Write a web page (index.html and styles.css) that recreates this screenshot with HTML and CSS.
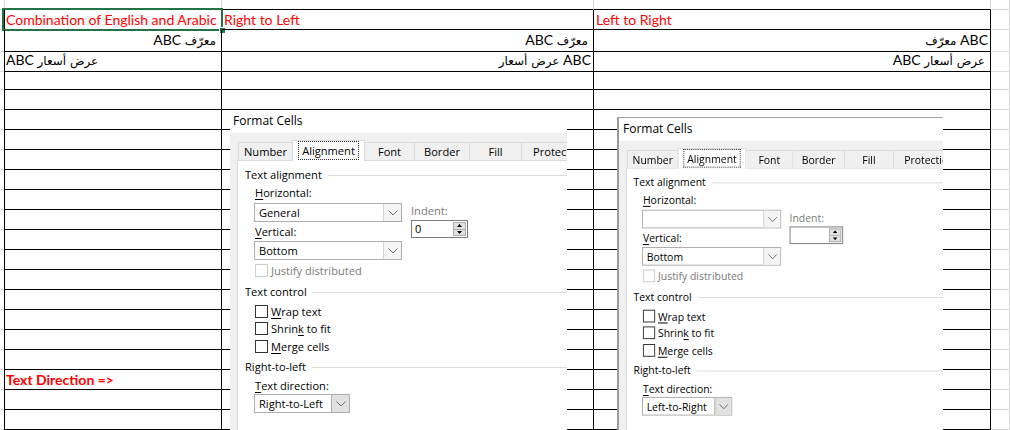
FILE: index.html
```html
<!DOCTYPE html>
<html lang="en">
<head>
<meta charset="utf-8">
<title>Text direction</title>
<link rel="stylesheet" href="styles.css">
</head>
<body>
<div class="sheet">
  <div class="row row-top"><div class="cell a"></div><div class="cell"></div><div class="cell"></div><div class="cell"></div><div class="cell e"></div></div>
  <div class="row"><div class="cell a"></div><div class="cell red active">Combination of English and Arabic<span class="selbox"><span class="handle"></span></span></div><div class="cell red">Right to Left</div><div class="cell red">Left to Right</div><div class="cell e"></div></div>
  <div class="row"><div class="cell a"></div><div class="cell r pa">ABC <span class="ar">معرّف</span></div><div class="cell r pa">ABC <span class="ar">معرّف</span></div><div class="cell r"><span class="ar">معرّف</span> ABC</div><div class="cell e"></div></div>
  <div class="row"><div class="cell a"></div><div class="cell">ABC <span class="ar">عرض أسعار</span></div><div class="cell r"><span class="ar">عرض أسعار</span> ABC</div><div class="cell r pa">ABC <span class="ar">عرض أسعار</span></div><div class="cell e"></div></div>
  <div class="row"><div class="cell a"></div><div class="cell"></div><div class="cell"></div><div class="cell"></div><div class="cell e"></div></div>
  <div class="row"><div class="cell a"></div><div class="cell"></div><div class="cell"></div><div class="cell"></div><div class="cell e"></div></div>
  <div class="row"><div class="cell a"></div><div class="cell"></div><div class="cell"></div><div class="cell"></div><div class="cell e"></div></div>
  <div class="row"><div class="cell a"></div><div class="cell"></div><div class="cell"></div><div class="cell"></div><div class="cell e"></div></div>
  <div class="row"><div class="cell a"></div><div class="cell"></div><div class="cell"></div><div class="cell"></div><div class="cell e"></div></div>
  <div class="row"><div class="cell a"></div><div class="cell"></div><div class="cell"></div><div class="cell"></div><div class="cell e"></div></div>
  <div class="row"><div class="cell a"></div><div class="cell"></div><div class="cell"></div><div class="cell"></div><div class="cell e"></div></div>
  <div class="row"><div class="cell a"></div><div class="cell"></div><div class="cell"></div><div class="cell"></div><div class="cell e"></div></div>
  <div class="row"><div class="cell a"></div><div class="cell"></div><div class="cell"></div><div class="cell"></div><div class="cell e"></div></div>
  <div class="row"><div class="cell a"></div><div class="cell"></div><div class="cell"></div><div class="cell"></div><div class="cell e"></div></div>
  <div class="row"><div class="cell a"></div><div class="cell"></div><div class="cell"></div><div class="cell"></div><div class="cell e"></div></div>
  <div class="row"><div class="cell a"></div><div class="cell"></div><div class="cell"></div><div class="cell"></div><div class="cell e"></div></div>
  <div class="row"><div class="cell a"></div><div class="cell"></div><div class="cell"></div><div class="cell"></div><div class="cell e"></div></div>
  <div class="row"><div class="cell a"></div><div class="cell"></div><div class="cell"></div><div class="cell"></div><div class="cell e"></div></div>
  <div class="row"><div class="cell a"></div><div class="cell"></div><div class="cell"></div><div class="cell"></div><div class="cell e"></div></div>
  <div class="row"><div class="cell a"></div><div class="cell red bold">Text Direction =&gt;</div><div class="cell"></div><div class="cell"></div><div class="cell e"></div></div>
  <div class="row"><div class="cell a"></div><div class="cell"></div><div class="cell"></div><div class="cell"></div><div class="cell e"></div></div>
  <div class="row"><div class="cell a"></div><div class="cell"></div><div class="cell"></div><div class="cell"></div><div class="cell e"></div></div>
</div>

<div class="dlg dlg-a">
  <div class="dlg-title">Format Cells</div>
  <div class="dlg-body">
    <div class="dlg-inner">
      <div class="tabs">
        <div class="tab t-num">Number</div>
        <div class="tab tab-on t-ali"><span class="focus">Alignment</span></div>
        <div class="tab t-font">Font</div>
        <div class="tab t-bor">Border</div>
        <div class="tab t-fill">Fill</div>
        <div class="tab t-pro">Protection</div>
      </div>
      <div class="panel">
        <div class="legend legend-first"><span>Text alignment</span></div>
        <div class="group align-row">
          <div class="col">
            <div class="lbl lbl-h"><u>H</u>orizontal:</div>
            <div class="combo combo-wide"><span class="combo-val">General</span><span class="dd"><svg width="10" height="6" viewBox="0 0 10 6"><path d="M0.5 0.5 L5 5 L9.5 0.5" fill="none" stroke="#6e6e6e" stroke-width="1"/></svg></span></div>
            <div class="lbl lbl-v"><u>V</u>ertical:</div>
            <div class="combo combo-wide combo-v"><span class="combo-val">Bottom</span><span class="dd"><svg width="10" height="6" viewBox="0 0 10 6"><path d="M0.5 0.5 L5 5 L9.5 0.5" fill="none" stroke="#6e6e6e" stroke-width="1"/></svg></span></div>
          </div>
          <div class="indent">
            <div class="lbl dis">Indent:</div>
            <div class="spin"><span class="spin-val">0</span><span class="spin-btns"><span class="sb"><svg width="5" height="3" viewBox="0 0 5 3"><path d="M0 3 L2.5 0 L5 3Z" fill="#000"/></svg></span><span class="sb"><svg width="5" height="3" viewBox="0 0 5 3"><path d="M0 0 L2.5 3 L5 0Z" fill="#000"/></svg></span></span></div>
          </div>
        </div>
        <div class="group chk chk-just dis"><span class="box"></span>Justify distributed</div>
        <div class="legend legend-tc"><span>Text control</span></div>
        <div class="group chk chk-first"><span class="box"></span><span><u>W</u>rap text</span></div>
        <div class="group chk"><span class="box"></span><span>Shrin<u>k</u> to fit</span></div>
        <div class="group chk"><span class="box"></span><span><u>M</u>erge cells</span></div>
        <div class="legend legend-rtl"><span>Right-to-left</span></div>
        <div class="group lbl lbl-td"><u>T</u>ext direction:</div>
        <div class="group combo combo-dir"><span class="combo-val">Right-to-Left</span><span class="dd dd-gray"><svg width="10" height="6" viewBox="0 0 10 6"><path d="M0.5 0.5 L5 5 L9.5 0.5" fill="none" stroke="#6e6e6e" stroke-width="1"/></svg></span></div>
      </div>
    </div>
  </div>
</div>

<div class="dlg dlg-b">
  <div class="dlg-title">Format Cells</div>
  <div class="dlg-body">
    <div class="dlg-inner">
      <div class="tabs">
        <div class="tab t-num">Number</div>
        <div class="tab tab-on t-ali"><span class="focus">Alignment</span></div>
        <div class="tab t-font">Font</div>
        <div class="tab t-bor">Border</div>
        <div class="tab t-fill">Fill</div>
        <div class="tab t-pro">Protection</div>
      </div>
      <div class="panel">
        <div class="legend legend-first"><span>Text alignment</span></div>
        <div class="group align-row">
          <div class="col">
            <div class="lbl lbl-h"><u>H</u>orizontal:</div>
            <div class="combo combo-wide"><span class="combo-val"></span><span class="dd"><svg width="10" height="6" viewBox="0 0 10 6"><path d="M0.5 0.5 L5 5 L9.5 0.5" fill="none" stroke="#6e6e6e" stroke-width="1"/></svg></span></div>
            <div class="lbl lbl-v"><u>V</u>ertical:</div>
            <div class="combo combo-wide combo-v"><span class="combo-val">Bottom</span><span class="dd"><svg width="10" height="6" viewBox="0 0 10 6"><path d="M0.5 0.5 L5 5 L9.5 0.5" fill="none" stroke="#6e6e6e" stroke-width="1"/></svg></span></div>
          </div>
          <div class="indent">
            <div class="lbl dis">Indent:</div>
            <div class="spin"><span class="spin-val"></span><span class="spin-btns"><span class="sb"><svg width="5" height="3" viewBox="0 0 5 3"><path d="M0 3 L2.5 0 L5 3Z" fill="#000"/></svg></span><span class="sb"><svg width="5" height="3" viewBox="0 0 5 3"><path d="M0 0 L2.5 3 L5 0Z" fill="#000"/></svg></span></span></div>
          </div>
        </div>
        <div class="group chk chk-just dis"><span class="box"></span>Justify distributed</div>
        <div class="legend legend-tc"><span>Text control</span></div>
        <div class="group chk chk-first"><span class="box"></span><span><u>W</u>rap text</span></div>
        <div class="group chk"><span class="box"></span><span>Shrin<u>k</u> to fit</span></div>
        <div class="group chk"><span class="box"></span><span><u>M</u>erge cells</span></div>
        <div class="legend legend-rtl"><span>Right-to-left</span></div>
        <div class="group lbl lbl-td"><u>T</u>ext direction:</div>
        <div class="group combo combo-dir"><span class="combo-val">Left-to-Right</span><span class="dd dd-gray"><svg width="10" height="6" viewBox="0 0 10 6"><path d="M0.5 0.5 L5 5 L9.5 0.5" fill="none" stroke="#6e6e6e" stroke-width="1"/></svg></span></div>
      </div>
    </div>
  </div>
</div>
</body>
</html>
```

FILE: styles.css
```css
html, body {
  margin: 0;
  padding: 0;
  background: #fff;
}
body {
  width: 1010px;
  height: 430px;
  overflow: hidden;
  position: relative;
  font-family: "Lato", "DejaVu Sans", sans-serif;
}

/* ---------- worksheet ---------- */
.sheet {
  display: flex;
  flex-direction: column;
}
.row {
  display: grid;
  grid-template-columns: 4px 218px 372px 397px 1fr;
  height: 20px;
  flex: none;
}
.row-top {
  height: 10px;
}
.cell {
  box-sizing: border-box;
  border-right: 1px solid #000;
  border-bottom: 1px solid #000;
  font-size: 14px;
  line-height: 19px;
  padding: 0 2px;
  white-space: nowrap;
  color: #000;
  position: relative;
}
.cell.a {
  border-bottom-color: #d9d9d9;
}
.cell.e {
  border-color: #d9d9d9;
}
.row-top .cell {
  border-right-color: #d9d9d9;
}
.row-top .cell.a {
  border-bottom-color: #d9d9d9;
}
.cell.r {
  text-align: right;
}
.cell.pa {
  padding-right: 5px;
}
.cell.red {
  color: #ff0000;
}
.cell.bold {
  font-weight: 700;
}
.ar {
  font-family: "DejaVu Sans", sans-serif;
  font-size: 12px;
}
.selbox {
  position: absolute;
  left: -2px;
  top: -2px;
  right: -2px;
  bottom: -2px;
  border: 2px solid #217346;
  pointer-events: none;
}
.handle {
  position: absolute;
  right: -5px;
  bottom: -5px;
  width: 5px;
  height: 5px;
  background: #217346;
  border: 1px solid #fff;
}

/* ---------- dialogs ---------- */
.dlg {
  position: absolute;
  overflow: hidden;
  background: #fff;
  font-family: "Open Sans", "Noto Sans", sans-serif;
  font-size: 11.1px;
  color: #000;
  z-index: 2;
}
.dlg-a {
  left: 230px;
  top: 110px;
  width: 337px;
  bottom: 0;
}
.dlg-b {
  left: 617px;
  top: 117px;
  width: 324px;
  bottom: 0;
  border-top: 1px solid #a3a3a3;
  border-left: 2px solid #9a9a9a;
}
.dlg-title {
  height: 23px;
  line-height: 22px;
  padding-left: 3px;
  font-size: 12px;
}
.dlg-b .dlg-title {
  padding-left: 4px;
}
.dlg-body {
  background: #f0f0f0;
  padding: 9px 0 0 7px;
  height: 400px;
}
.dlg-b .dlg-inner {
  transform: scale(0.94, 0.98);
  transform-origin: 0 0;
}

.tabs {
  display: flex;
  align-items: flex-end;
  height: 18px;
  padding-left: 1px;
  position: relative;
  z-index: 1;
}
.tab {
  box-sizing: border-box;
  flex: none;
  height: 18px;
  line-height: 17px;
  text-align: center;
  background: #f0f0f0;
  border-top: 1px solid #dadada;
  border-right: 1px solid #dadada;
  white-space: nowrap;
  overflow: hidden;
}
.t-num { width: 55px; border-left: 1px solid #dadada; }
.t-ali { width: 72px; }
.t-font { width: 50px; }
.t-bor { width: 55px; }
.t-fill { width: 52px; }
.t-pro { width: 84px; text-align: left; padding-left: 11px; }
.tab-on {
  height: 21px;
  line-height: 20px;
  background: #fff;
  border-left: 1px solid #dadada;
  margin-left: -1px;
  margin-bottom: -1px;
  width: 73px;
}
.focus {
  outline: 1px dotted #333;
  outline-offset: 0;
  padding: 1px 3px;
}

.panel {
  box-sizing: border-box;
  width: 420px;
  height: 320px;
  background: #fff;
  border: 1px solid #d9d9d9;
  padding: 6px 0 0 7px;
}
.legend {
  display: flex;
  align-items: center;
  height: 16px;
  line-height: 16px;
  white-space: nowrap;
}
.legend::after {
  content: "";
  flex: 1;
  height: 1px;
  background: #dcdcdc;
  margin-left: 6px;
}
.legend-tc {
  margin-top: 6px;
}
.legend-rtl {
  margin-top: 4px;
}
.group {
  margin-left: 9px;
}
.lbl {
  height: 16px;
  line-height: 16px;
  white-space: nowrap;
}
.lbl-h {
  margin-top: 2px;
  padding-left: 1px;
}
.lbl-v {
  margin-top: 2px;
  padding-left: 1px;
}
.lbl-td {
  margin-top: 3px;
  padding-left: 1px;
}
u {
  text-decoration: underline;
  text-underline-offset: 2px;
}
.dis {
  color: #7a7a7a;
}

.align-row {
  display: flex;
  gap: 9px;
}
.combo {
  box-sizing: border-box;
  display: flex;
  height: 19px;
  border: 1px solid #adadad;
  background: #fff;
  margin-top: 2px;
}
.combo-v {
  margin-top: 1px;
}
.combo-wide {
  width: 148px;
}
.combo-dir {
  width: 96px;
  margin-top: 0;
}
.combo-val {
  flex: 1;
  line-height: 17px;
  padding-left: 4px;
  white-space: nowrap;
}
.dd {
  width: 17px;
  display: flex;
  align-items: center;
  justify-content: center;
  border-left: 1px solid #d4d4d4;
  background: #f4f4f4;
}
.dd-gray {
  background: #e1e1e1;
  border-left: 1px solid #adadad;
}

.indent {
  padding-top: 20px;
}
.spin {
  box-sizing: border-box;
  display: flex;
  width: 57px;
  height: 18px;
  margin-top: 1px;
  border: 1px solid #7a7a7a;
  background: #fff;
}
.spin-val {
  flex: 1;
  padding-left: 3px;
  line-height: 16px;
}
.spin-btns {
  display: flex;
  flex-direction: column;
  width: 13px;
  padding: 1px 1px 1px 0;
  gap: 0;
}
.sb {
  flex: 1;
  display: flex;
  align-items: center;
  justify-content: center;
  background: #e1e1e1;
  border: 1px solid #adadad;
}
.sb + .sb {
  border-top: none;
}

.chk {
  display: flex;
  align-items: center;
  height: 17.5px;
  white-space: nowrap;
}
.chk-just {
  height: 16px;
  margin-top: 2px;
}
.chk-first {
  margin-top: 2.5px;
}
.box {
  box-sizing: border-box;
  width: 13px;
  height: 13px;
  border: 1px solid #333;
  background: #fff;
  margin-right: 3px;
  margin-left: 1px;
  flex: none;
}
.chk.dis .box {
  border-color: #cccccc;
}
```
